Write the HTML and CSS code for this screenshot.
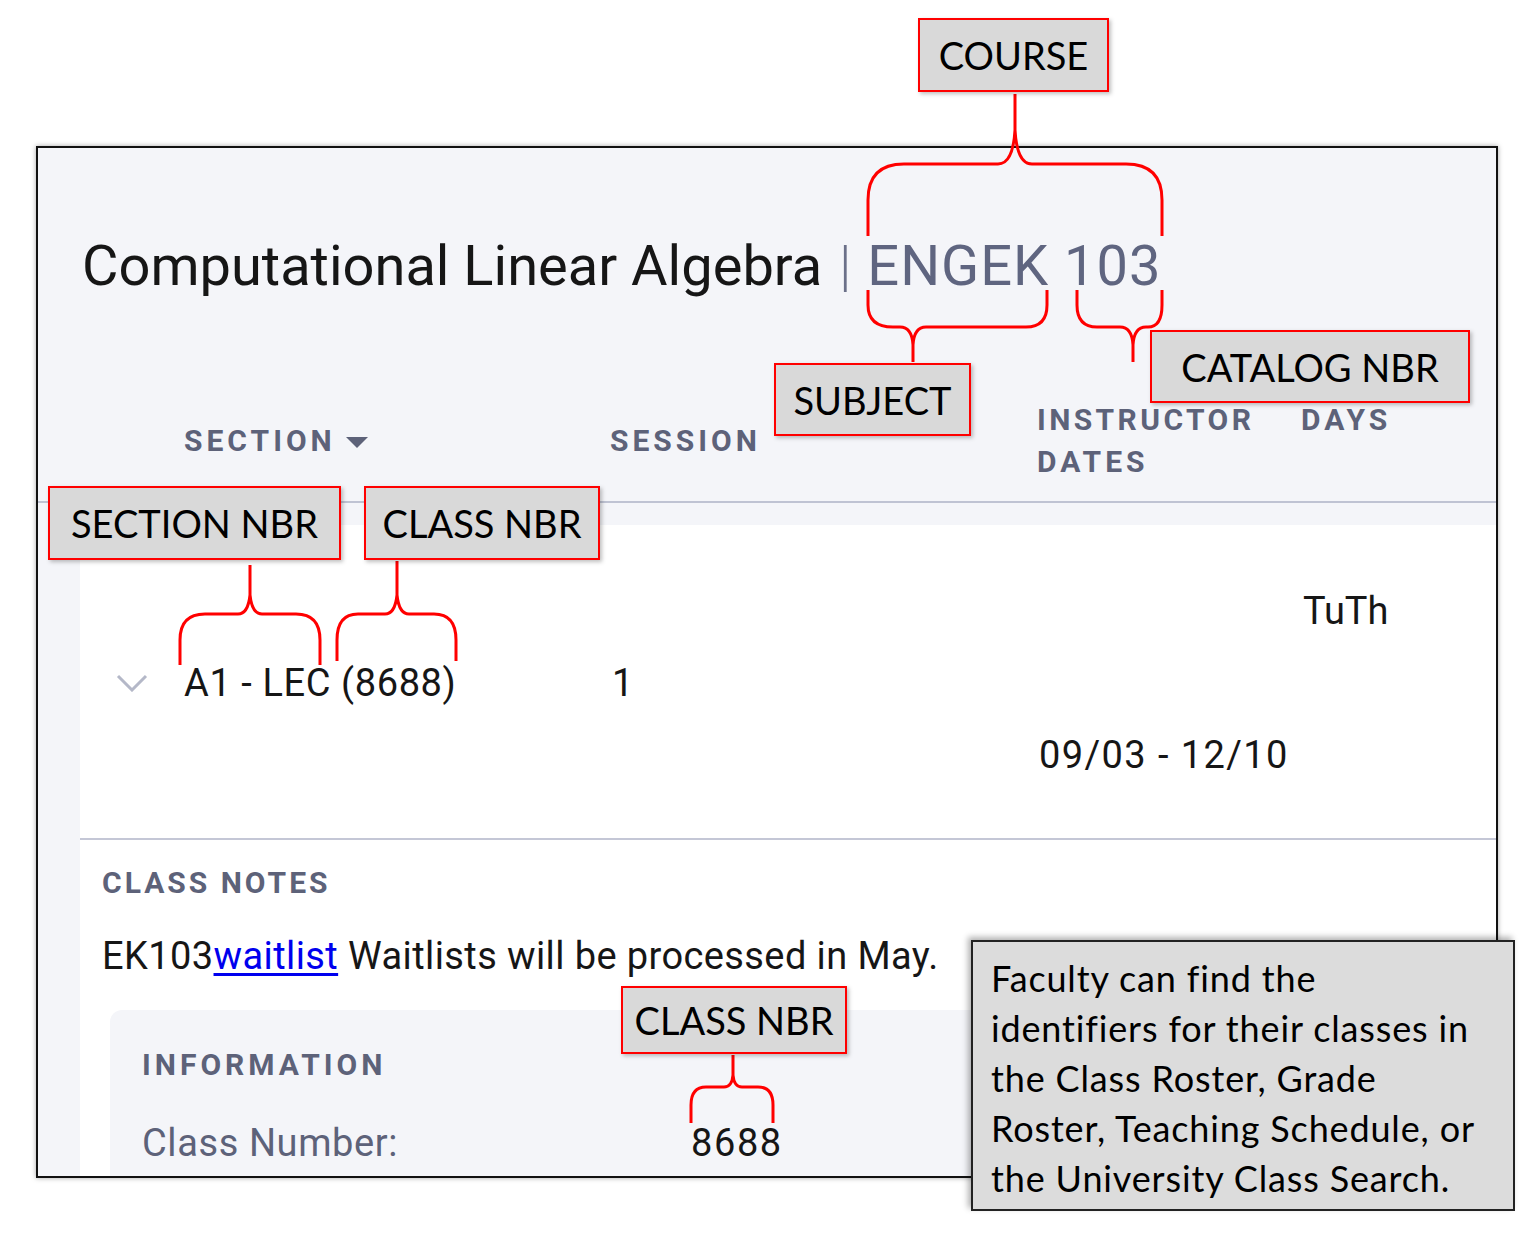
FILE: index.html
```html
<!DOCTYPE html>
<html lang="en">
<head>
<meta charset="utf-8">
<title>Class identifiers</title>
<link rel="stylesheet" href="styles.css">
</head>
<body>
<div class="page">
  <div class="frame">
    <h1 class="title">Computational Linear Algebra <span class="sep">|</span> <span class="code">ENGEK 103</span></h1>
    <div class="thead">
      <div class="th th-section">SECTION <svg class="caret" width="22" height="11" viewBox="0 0 22 11"><path d="M0 0H22L11 11Z" fill="#5d6279"/></svg></div>
      <div class="th th-session">SESSION</div>
      <div class="th th-instr">INSTRUCTOR</div>
      <div class="th th-days">DAYS</div>
      <div class="th th-dates">DATES</div>
    </div>
    <div class="tbody">
      <div class="row">
        <div class="chev"><svg width="32" height="18" viewBox="0 0 32 18"><path d="M2 2L16 16L30 2" fill="none" stroke="#b4b8c8" stroke-width="3"/></svg></div>
        <div class="cell c-section">A1 - LEC (8688)</div>
        <div class="cell c-session">1</div>
        <div class="cell c-days">TuTh</div>
        <div class="cell c-dates">09/03 - 12/10</div>
      </div>
      <div class="notes">
        <div class="notes-title">CLASS NOTES</div>
        <div class="notes-text">EK103<a class="link" href="#">waitlist</a> Waitlists will be processed in May.</div>
        <div class="info">
          <div class="info-title">INFORMATION</div>
          <div class="info-row"><span class="info-label">Class Number:</span><span class="info-value">8688</span></div>
        </div>
      </div>
    </div>
  </div>

  <svg class="braces" width="1536" height="1234" viewBox="0 0 1536 1234">
    <g fill="none" stroke="#ff0000" stroke-width="3" stroke-linecap="butt">
      <path d="M868,236 V200 Q868,164 904,164 H998 Q1013,164 1015,130 V94 M1015,130 Q1017,164 1032,164 H1126 Q1162,164 1162,200 V236"/>
      <path d="M868,290 V305 Q868,327 893,327 H900 Q912,327 913,345 V362 M913,345 Q914,327 926,327 H1026 Q1047,327 1047,305 V290"/>
      <path d="M1077,290 V305 Q1077,327 1097,327 H1120 Q1132,327 1133,345 V362 M1133,345 Q1134,327 1146,327 H1148 Q1162,327 1162,305 V290"/>
      <path d="M180,665 V640 Q180,614 205,614 H238 Q248,614 250,595 V565 M250,595 Q252,614 262,614 H296 Q320,614 320,640 V665"/>
      <path d="M337,661 V640 Q337,614 358,614 H385 Q395,614 397,595 V561 M397,595 Q399,614 409,614 H434 Q456,614 456,640 V661"/>
      <path d="M691,1123 V1105 Q691,1087 706,1087 H724 Q732,1087 733,1075 V1055 M733,1075 Q734,1087 742,1087 H758 Q773,1087 773,1105 V1123"/>
    </g>
  </svg>

  <div class="tag tag-course">COURSE</div>
  <div class="tag tag-subject">SUBJECT</div>
  <div class="tag tag-catalog">CATALOG NBR</div>
  <div class="tag tag-section">SECTION NBR</div>
  <div class="tag tag-class">CLASS NBR</div>
  <div class="tag tag-class2">CLASS NBR</div>

  <div class="note">Faculty can find the<br>identifiers for their classes in<br>the Class Roster, Grade<br>Roster, Teaching Schedule, or<br>the University Class Search.</div>
</div>
</body>
</html>
```
FILE: styles.css
```css
html, body {
  margin: 0;
  padding: 0;
  background: #ffffff;
}

.page {
  position: relative;
  width: 1536px;
  height: 1234px;
  overflow: hidden;
}

.frame {
  margin: 146px 0 0 36px;
  width: 1462px;
  height: 1032px;
  box-sizing: border-box;
  border: 2px solid #111111;
  background: #f4f5f9;
  overflow: hidden;
  box-shadow: 0 0 5px rgba(0, 0, 0, 0.35);
  font-family: Roboto, "Liberation Sans", sans-serif;
  color: #161616;
}

.title {
  margin: 0;
  padding: 84px 0 0 44px;
  font-size: 56px;
  line-height: 68px;
  font-weight: 400;
  color: #161616;
  white-space: nowrap;
}

.sep {
  color: #6b7089;
  font-weight: 300;
  margin-left: 3px;
}

.code {
  color: #5f6580;
  letter-spacing: 1px;
  margin-left: 2px;
}

.thead {
  display: grid;
  grid-template-columns: 426px 427px 264px auto;
  grid-template-rows: 42px 42px;
  margin-top: 99px;
  padding: 0 0 18px 146px;
  border-bottom: 2px solid #bfc3d3;
  font-size: 30px;
  line-height: 42px;
  font-weight: 700;
  letter-spacing: 4px;
  color: #5d6279;
}

.th-section,
.th-session {
  grid-row: 1 / 3;
  align-self: center;
}

.th-section {
  display: flex;
  align-items: center;
}

.caret {
  margin-left: 10px;
  margin-top: 2px;
}

.th-instr { grid-column: 3; grid-row: 1; letter-spacing: 3.4px; }
.th-days { grid-column: 4; grid-row: 1; }
.th-dates { grid-column: 3; grid-row: 2; }

.tbody {
  margin: 22px 0 0 42px;
  background: #ffffff;
  min-height: 700px;
}

.row {
  display: grid;
  grid-template-columns: 68px 428px 427px 264px 1fr;
  grid-template-rows: 72px 72px 72px;
  padding: 50px 0 47px 36px;
  border-bottom: 2px solid #c4c7d6;
  font-size: 38px;
  line-height: 72px;
  letter-spacing: 0.6px;
}

.chev {
  grid-column: 1;
  grid-row: 2;
  display: flex;
  align-items: center;
}

.c-section { grid-column: 2; grid-row: 2; }
.c-session { grid-column: 3; grid-row: 2; }
.c-days { grid-column: 5; grid-row: 1; letter-spacing: 0; }
.c-dates { grid-column: 4; grid-row: 3; letter-spacing: 1.4px; }

.notes {
  padding: 22px 0 0 22px;
}

.notes-title {
  font-size: 30px;
  line-height: 42px;
  font-weight: 700;
  letter-spacing: 3px;
  color: #5d6279;
}

.notes-text {
  margin-top: 25px;
  font-size: 38px;
  line-height: 54px;
  letter-spacing: 0.4px;
}

.link {
  color: #0000ee;
  text-decoration: underline;
  text-underline-offset: 4px;
}

.info {
  margin: 27px 22px 0 8px;
  padding: 34px 32px 40px;
  background: #f4f5f9;
  border-radius: 12px;
}

.info-title {
  font-size: 30px;
  line-height: 42px;
  font-weight: 700;
  letter-spacing: 4px;
  color: #5d6279;
}

.info-row {
  display: grid;
  grid-template-columns: 549px auto;
  margin-top: 30px;
  font-size: 38px;
  line-height: 54px;
  letter-spacing: 0.6px;
}

.info-label {
  color: #5d6279;
}

.info-value {
  color: #161616;
  letter-spacing: 1.6px;
}

.braces {
  position: absolute;
  left: 0;
  top: 0;
  pointer-events: none;
}

.tag {
  position: absolute;
  box-sizing: border-box;
  display: flex;
  align-items: center;
  justify-content: center;
  background: #d9d9d9;
  border: 2px solid #ff0000;
  box-shadow: 2px 2px 4px rgba(0, 0, 0, 0.25);
  font-family: Lato, "Open Sans", sans-serif;
  font-size: 38px;
  color: #000000;
  white-space: nowrap;
}

.tag-course { left: 918px; top: 18px; width: 191px; height: 74px; }
.tag-subject { left: 774px; top: 363px; width: 197px; height: 73px; }
.tag-catalog { left: 1150px; top: 330px; width: 320px; height: 73px; }
.tag-section { left: 48px; top: 486px; width: 293px; height: 74px; }
.tag-class { left: 364px; top: 486px; width: 236px; height: 74px; }
.tag-class2 { left: 621px; top: 986px; width: 226px; height: 68px; }

.note {
  position: absolute;
  left: 971px;
  top: 940px;
  width: 544px;
  height: 271px;
  box-sizing: border-box;
  padding: 11px 10px 0 18px;
  background: #dcdcdc;
  border: 2px solid #222222;
  box-shadow: -3px -3px 6px rgba(0, 0, 0, 0.3);
  font-family: Lato, "Open Sans", sans-serif;
  font-size: 36px;
  line-height: 50px;
  letter-spacing: 0.85px;
  color: #000000;
  white-space: nowrap;
}
```
